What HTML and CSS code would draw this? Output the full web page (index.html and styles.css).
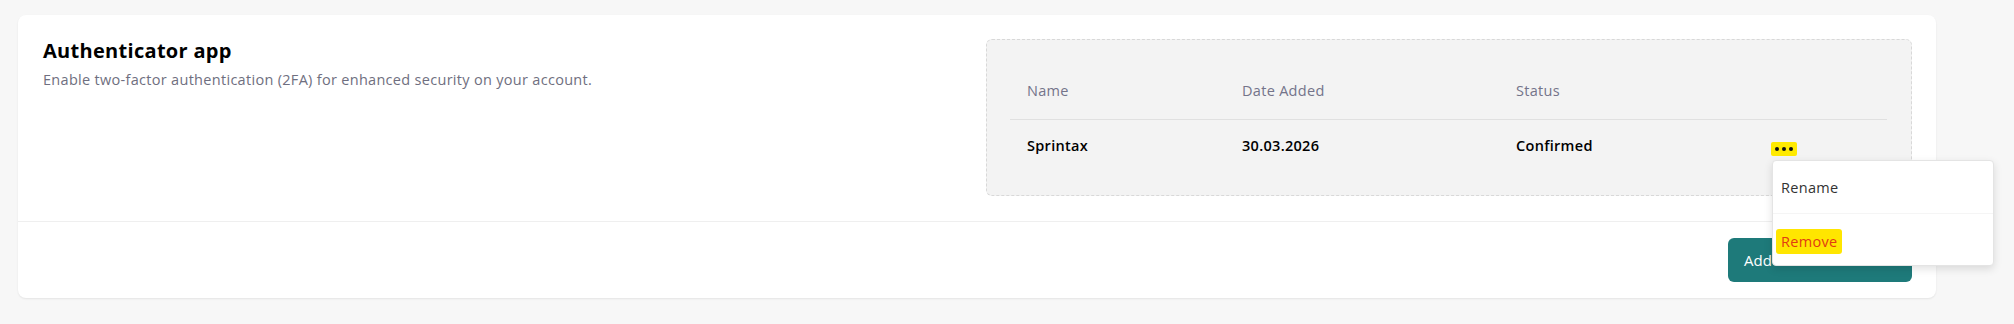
FILE: index.html
```html
<!DOCTYPE html>
<html lang="en">
<head>
<meta charset="utf-8">
<title>Authenticator app</title>
<link rel="stylesheet" href="styles.css">
</head>
<body>
<div class="card">
  <div class="card-body">
    <div class="intro">
      <h2 class="title">Authenticator app</h2>
      <p class="subtitle">Enable two-factor authentication (2FA) for enhanced security on your account.</p>
    </div>
    <div class="devices">
      <table class="tbl">
        <colgroup>
          <col class="c-name"><col class="c-date"><col class="c-status"><col class="c-act">
        </colgroup>
        <thead>
          <tr><th>Name</th><th>Date Added</th><th>Status</th><th></th></tr>
        </thead>
        <tbody>
          <tr>
            <td>Sprintax</td>
            <td>30.03.2026</td>
            <td>Confirmed</td>
            <td>
              <div class="actions">
                <span class="more"><i></i><i></i><i></i></span>
                <div class="menu">
                  <div class="menu-item">Rename</div>
                  <div class="menu-item danger"><span class="mark">Remove</span></div>
                </div>
              </div>
            </td>
          </tr>
        </tbody>
      </table>
    </div>
  </div>
  <div class="card-foot">
    <button class="btn">Add authenticator</button>
  </div>
</div>
</body>
</html>
```

FILE: styles.css
```css
* { box-sizing: border-box; }
html, body { margin: 0; }
body {
  background: #f7f7f7;
  font-family: "Open Sans", "DejaVu Sans", sans-serif;
  padding: 15px 78px 20px 18px;
  color: #111;
}
.card {
  background: #fff;
  border-radius: 8px;
  box-shadow: 0 1px 2px rgba(0,0,0,0.08);
  width: 1918px;
}
.card-body {
  display: flex;
  justify-content: space-between;
  padding: 24px 24px 25px 25px;
  border-bottom: 1px solid #efefef;
}
.title {
  margin: 0;
  font-size: 20px;
  line-height: 24px;
  font-weight: 700;
  letter-spacing: 0.3px;
  color: #000;
}
.subtitle {
  margin: 7px 0 0;
  font-size: 14.5px;
  line-height: 20px;
  letter-spacing: 0.3px;
  color: #6f6f80;
}
.devices {
  width: 926px;
  background: #f3f3f3;
  border: 1px dashed #d8d8d8;
  border-radius: 6px;
  padding: 23px 24px 23px 23px;
}
.tbl {
  width: 100%;
  border-collapse: collapse;
  table-layout: fixed;
  font-size: 14.5px;
  letter-spacing: 0.3px;
}
.c-name { width: 215px; }
.c-date { width: 274px; }
.c-status { width: 255px; }
.c-act { width: 133px; }
.tbl th {
  text-align: left;
  font-weight: 400;
  color: #74748a;
  height: 56px;
  padding: 0 0 0 17px;
  border-bottom: 1px solid #e0e0e0;
}
.tbl td {
  height: 53px;
  padding: 0 0 0 17px;
  font-weight: 600;
  color: #000;
}
.actions {
  position: relative;
  display: inline-block;
  vertical-align: middle;
}
.more {
  display: inline-flex;
  gap: 3px;
  padding: 5px 4px;
  background: #ffea00;
  border-radius: 2px;
}
.more i {
  width: 4px;
  height: 4px;
  border-radius: 50%;
  background: #111;
}
.menu {
  position: absolute;
  top: 24px;
  left: 1px;
  width: 222px;
  background: #fff;
  border: 1px solid #e4e4e4;
  border-radius: 4px;
  box-shadow: 0 3px 8px rgba(0,0,0,0.12);
  z-index: 5;
  letter-spacing: 0.3px;
}
.menu-item {
  height: 52px;
  display: flex;
  align-items: center;
  padding-left: 8px;
  font-weight: 400;
  color: #333;
}
.menu-item + .menu-item { border-top: 1px solid #f5f5f5; padding-top: 3px; }
.menu-item.danger { padding-left: 3px; color: #e23c12; }
.mark {
  background: #ffe600;
  padding: 3px 5px;
  border-radius: 3px;
}
.card-foot {
  display: flex;
  justify-content: flex-end;
  padding: 16px 24px 16px 24px;
}
.btn {
  width: 184px;
  height: 44px;
  border: 0;
  border-radius: 6px;
  background: #1e7a7a;
  color: #fff;
  font-family: inherit;
  font-size: 15px;
  font-weight: 500;
  text-align: left;
  white-space: nowrap;
  padding-left: 16px;
}
```
